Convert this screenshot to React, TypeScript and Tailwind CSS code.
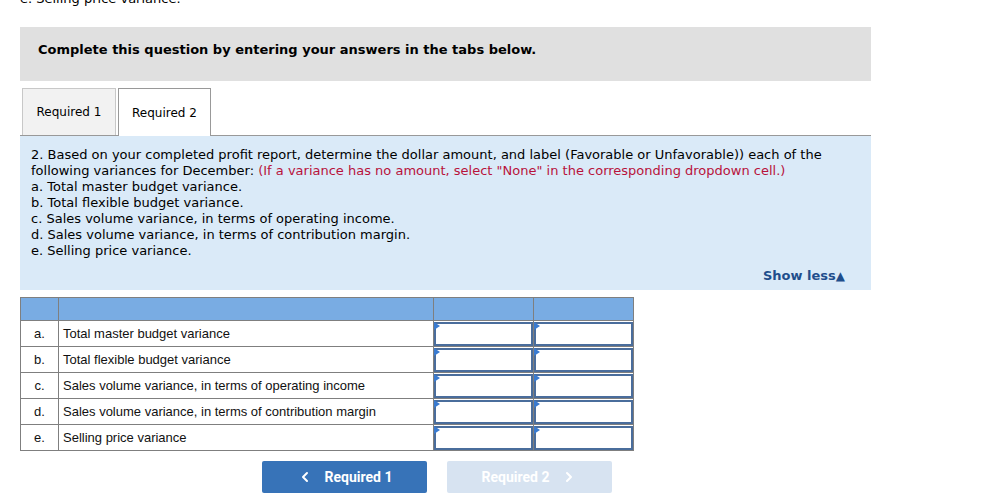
import { ChevronLeft, ChevronRight } from "lucide-react";

const rows = [
  { key: "a.", label: "Total master budget variance" },
  { key: "b.", label: "Total flexible budget variance" },
  { key: "c.", label: "Sales volume variance, in terms of operating income" },
  { key: "d.", label: "Sales volume variance, in terms of contribution margin" },
  { key: "e.", label: "Selling price variance" },
];

const InputCell = () => (
  <td className="h-[26px] p-0 border border-[#7f7f7f]">
    <div className="relative h-[24px] border-2 border-[#4a6d9c] bg-white">
      {/* dropdown marker */}
      <span className="absolute -left-[2px] -top-[2px] w-0 h-0 border-y-[4px] border-y-transparent border-l-[6px] border-l-[#3a7bd0]" />
    </div>
  </td>
);

const App = () => {
  return (
    <div className="min-h-screen bg-white overflow-hidden text-black" style={{ fontFamily: "'DejaVu Sans', Verdana, sans-serif" }}>
      <div className="pl-[20px] pr-[112px]">
        {/* cut-off previous line */}
        <div className="-mt-[9px] h-[16px] text-[13px] leading-[16px]">e. Selling price variance.</div>

        {/* Banner */}
        <div className="mt-[20px] h-[54px] bg-[#e0e0e0] pl-[18px] pt-[10px]">
          <span className="font-bold text-[13px] leading-[16px]">Complete this question by entering your answers in the tabs below.</span>
        </div>

        {/* Tabs */}
        <div className="mt-[7px] flex items-end gap-[2px] pl-[2px] border-b border-[#999999] h-[48px]">
          <div className="h-[47px] w-[94px] bg-[#f2f2f2] border border-b-0 border-[#c8c8c8] flex items-center justify-center text-[12px]">
            Required 1
          </div>
          <div className="h-[48px] -mb-px w-[93px] bg-white border border-b-0 border-[#999999] flex items-center justify-center text-[12px]">
            Required 2
          </div>
        </div>

        {/* Question panel */}
        <div className="h-[154px] bg-[#daeaf8] pl-[11px] pr-[26px] pt-[11px] flex flex-col text-[13px] leading-[16px]">
          <p>
            2. Based on your completed profit report, determine the dollar amount, and label (Favorable or Unfavorable)) each of the
            following variances for December:{" "}
            <span className="text-[#b8133c]">(If a variance has no amount, select "None" in the corresponding dropdown cell.)</span>
          </p>
          <p>a. Total master budget variance.</p>
          <p>b. Total flexible budget variance.</p>
          <p>c. Sales volume variance, in terms of operating income.</p>
          <p>d. Sales volume variance, in terms of contribution margin.</p>
          <p>e. Selling price variance.</p>
          <div className="mt-auto mb-[6px] self-end font-bold text-[#1f4e8c] flex items-center leading-[16px]">
            Show less<span className="text-[12px] leading-[16px]">▲</span>
          </div>
        </div>

        {/* Table */}
        <table className="mt-[7px] border-collapse table-fixed w-[613px] text-[13px] text-[#111]" style={{ fontFamily: "'Liberation Sans', Arial, sans-serif" }}>
          <colgroup>
            <col className="w-[38px]" />
            <col className="w-[375px]" />
            <col className="w-[100px]" />
            <col className="w-[100px]" />
          </colgroup>
          <thead>
            <tr className="h-[23px] bg-[#79ace3]">
              <th className="border border-[#7f7f7f]" />
              <th className="border border-[#7f7f7f]" />
              <th className="border border-[#7f7f7f]" />
              <th className="border border-[#7f7f7f]" />
            </tr>
          </thead>
          <tbody>
            {rows.map((r) => (
              <tr key={r.key} className="h-[26px]">
                <td className="border border-[#7f7f7f] text-center">{r.key}</td>
                <td className="border border-[#7f7f7f] pl-[4px] whitespace-nowrap">{r.label}</td>
                <InputCell />
                <InputCell />
              </tr>
            ))}
          </tbody>
        </table>

        {/* Nav buttons */}
        <div className="mt-[10px] flex gap-[20px] pl-[242px]" style={{ fontFamily: "Roboto, Arial, sans-serif" }}>
          <button className="w-[165px] h-[32px] rounded-[2px] bg-[#3773b8] text-white font-bold text-[14px] flex items-center justify-center gap-[12px]">
            <ChevronLeft size={16} strokeWidth={3} />
            Required 1
          </button>
          <button className="w-[165px] h-[32px] rounded-[2px] bg-[#d7e3f1] text-white font-bold text-[14px] flex items-center justify-center gap-[12px]">
            Required 2
            <ChevronRight size={16} strokeWidth={3} />
          </button>
        </div>
      </div>
    </div>
  );
};

export default App;
